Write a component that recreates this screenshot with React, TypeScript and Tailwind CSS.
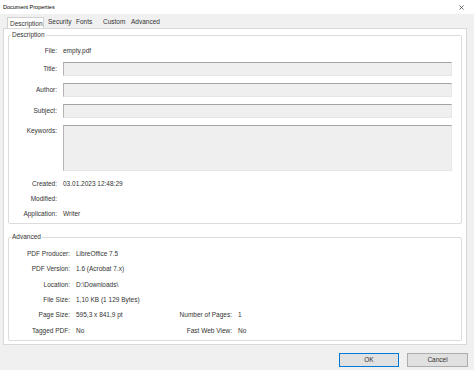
import type { ReactNode } from 'react';

const FONT = { fontFamily: '"Liberation Sans", Arial, sans-serif' };

const Row = ({ label, children }: { label: string; children?: ReactNode }) => (
  <div className="flex h-[15px] items-center leading-[15px]">
    <span className="w-[48px] shrink-0 text-right">{label}</span>
    <span className="ml-[6px]">{children}</span>
  </div>
);

const Field = ({ label, tall }: { label: string; tall?: boolean }) => (
  <div className={tall ? 'flex items-start' : 'flex items-center'}>
    <span
      className={
        tall
          ? 'w-[48px] shrink-0 text-right leading-[11px]'
          : 'w-[48px] shrink-0 text-right'
      }
    >
      {label}
    </span>
    <div
      className={
        (tall ? 'h-[46px] ' : 'h-[14px] ') +
        'ml-[6px] mr-[9px] flex-1 border border-t-[#a3a3a3] border-l-[#b4b4b4] border-r-[#e6e6e6] border-b-[#e6e6e6] bg-[#efefef]'
      }
    />
  </div>
);

const AdvRow = ({
  label,
  value,
  label2,
  value2,
}: {
  label: string;
  value: string;
  label2?: string;
  value2?: string;
}) => (
  <div className="flex h-[15.4px] items-center">
    <span className="w-[61px] shrink-0 text-right">{label}</span>
    <span className="ml-[6px] w-[90px] shrink-0">{value}</span>
    {label2 && (
      <>
        <span className="w-[66px] shrink-0 text-right">{label2}</span>
        <span className="ml-[6px]">{value2}</span>
      </>
    )}
  </div>
);

export default function App() {
  return (
    <div
      className="flex h-[370px] w-[474px] flex-col overflow-hidden bg-[#f0f0f0] text-[6.5px] text-[#333]"
      style={FONT}
    >
      {/* title bar */}
      <div className="flex h-[14px] shrink-0 items-center justify-between bg-white pl-[3px] pr-[10px]">
        <span className="text-[5.5px] text-black">Document Properties</span>
        <svg width="5" height="5" viewBox="0 0 5 5" className="text-[#444]">
          <path d="M0.5 0.5 L4.5 4.5 M4.5 0.5 L0.5 4.5" stroke="currentColor" strokeWidth="0.8" />
        </svg>
      </div>

      {/* tabs */}
      <div className="flex h-[14px] shrink-0 items-end pl-[7px]">
        <div className="-mb-px flex h-[12px] w-[37px] items-center border border-b-0 border-[#d0d0d0] bg-white pl-[2px]">
          Description
        </div>
        <div className="flex h-[12px] w-[30px] items-center pl-[4px]">Security</div>
        <div className="flex h-[12px] w-[25px] items-center pl-[2px]">Fonts</div>
        <div className="flex h-[12px] w-[29px] items-center pl-[4px]">Custom</div>
        <div className="flex h-[12px] w-[34px] items-center pl-[3px]">Advanced</div>
      </div>

      {/* tab page */}
      <div className="ml-[3px] w-[464px] border border-[#d9d9d9] bg-white px-[4px] pb-[3px] pt-[1px]">
        <fieldset className="rounded-[2px] border border-[#dcdcdc]">
          <legend className="ml-[2px] px-[1px] leading-[10px]">Description</legend>
          <div className="flex flex-col pb-[2px] pt-[3px]">
            <Row label="File:">empty.pdf</Row>
            <div className="mt-[4px]">
              <Field label="Title:" />
            </div>
            <div className="mt-[7px]">
              <Field label="Author:" />
            </div>
            <div className="mt-[7px]">
              <Field label="Subject:" />
            </div>
            <div className="mt-[7px]">
              <Field label="Keywords:" tall />
            </div>
            <div className="mt-[5px]">
              <Row label="Created:">03.01.2023 12:48:29</Row>
              <Row label="Modified:" />
              <Row label="Application:">Writer</Row>
            </div>
          </div>
        </fieldset>

        <fieldset className="mt-[8px] rounded-[2px] border border-[#dcdcdc]">
          <legend className="ml-[2px] px-[1px] leading-[10px]">Advanced</legend>
          <div className="flex flex-col pb-[2px] pt-[4px]">
            <AdvRow label="PDF Producer:" value="LibreOffice 7.5" />
            <AdvRow label="PDF Version:" value="1.6 (Acrobat 7.x)" />
            <AdvRow label="Location:" value="D:\Downloads\" />
            <AdvRow label="File Size:" value="1,10 KB (1 129 Bytes)" />
            <AdvRow
              label="Page Size:"
              value="595,3 x 841,9 pt"
              label2="Number of Pages:"
              value2="1"
            />
            <AdvRow label="Tagged PDF:" value="No" label2="Fast Web View:" value2="No" />
          </div>
        </fieldset>
      </div>

      {/* buttons */}
      <div className="mt-[8px] flex justify-end gap-[8px] pr-[6px]">
        <button className="flex h-[14px] w-[60px] items-center justify-center border border-[#0078d7] bg-[#e1e1e1] text-[#333]">
          OK
        </button>
        <button className="flex h-[14px] w-[61px] items-center justify-center border border-[#adadad] bg-[#e1e1e1] text-[#333]">
          Cancel
        </button>
      </div>
    </div>
  );
}
